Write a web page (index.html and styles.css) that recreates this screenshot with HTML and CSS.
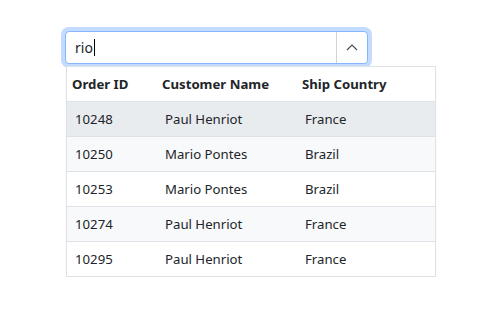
FILE: index.html
```html
<!doctype html>
<html>
  <head>
    <title>Orders</title>
    <meta charset="utf-8">
    <link rel="stylesheet" href="styles.css">
  </head>
  <body>
    <div class="page">
      <div class="combo">
        <div class="combo-input">
          <span class="combo-text">rio</span><span class="caret"></span>
        </div>
        <button class="combo-toggle" type="button" aria-label="Close">
          <svg width="12" height="7" viewBox="0 0 12 7">
            <path d="M1 6 L6 1 L11 6" fill="none" stroke="#495057" stroke-width="1.2"/>
          </svg>
        </button>
      </div>
      <div class="popup">
        <table>
          <thead>
            <tr>
              <th class="col-id">Order ID</th>
              <th class="col-name">Customer Name</th>
              <th>Ship Country</th>
            </tr>
          </thead>
          <tbody>
            <tr class="active"><td>10248</td><td>Paul Henriot</td><td>France</td></tr>
            <tr class="alt"><td>10250</td><td>Mario Pontes</td><td>Brazil</td></tr>
            <tr><td>10253</td><td>Mario Pontes</td><td>Brazil</td></tr>
            <tr class="alt"><td>10274</td><td>Paul Henriot</td><td>France</td></tr>
            <tr><td>10295</td><td>Paul Henriot</td><td>France</td></tr>
          </tbody>
        </table>
      </div>
    </div>
  </body>
</html>
```

FILE: styles.css
```css
body {
  margin: 0;
  background: white;
  font-family: "Segoe UI", "Noto Sans", sans-serif;
  font-size: 13.2px;
  color: #212529;
}
.page {
  padding: 31px 0 0 65px;
}
.combo {
  display: flex;
  width: 303px;
  height: 33px;
  box-sizing: border-box;
  border: 1px solid #86b7fe;
  border-radius: 4px;
  box-shadow: 0 0 0 4px rgba(13, 110, 253, 0.25);
  background: white;
}
.combo-input {
  flex: 1;
  display: flex;
  align-items: center;
  padding-left: 9px;
  font-size: 14px;
}
.caret {
  display: inline-block;
  width: 1px;
  height: 17px;
  background: #000;
  margin-left: 1px;
}
.combo-toggle {
  width: 31px;
  border: 0;
  border-left: 1px solid #ced4da;
  background: none;
  padding: 0;
  display: flex;
  align-items: center;
  justify-content: center;
}
.popup {
  width: 370px;
  margin: 2px 0 0 1px;
  box-sizing: border-box;
  background: white;
  border: 1px solid #dee2e6;
  box-shadow: 0 1px 1px rgba(0, 0, 0, 0.08);
}
table {
  width: 100%;
  border-collapse: collapse;
  table-layout: fixed;
}
th, td {
  height: 34px;
  padding: 0 0 0 5px;
  text-align: left;
  border-bottom: 1px solid #dee2e6;
}
th {
  font-weight: bold;
}
td {
  padding-left: 8px;
}
tbody tr:last-child td {
  border-bottom: 0;
}
.col-id {
  width: 85px;
}
.col-name {
  width: 135px;
}
tr.alt {
  background: #f8f9fa;
}
tr.active {
  background: #e9ecef;
}
```
